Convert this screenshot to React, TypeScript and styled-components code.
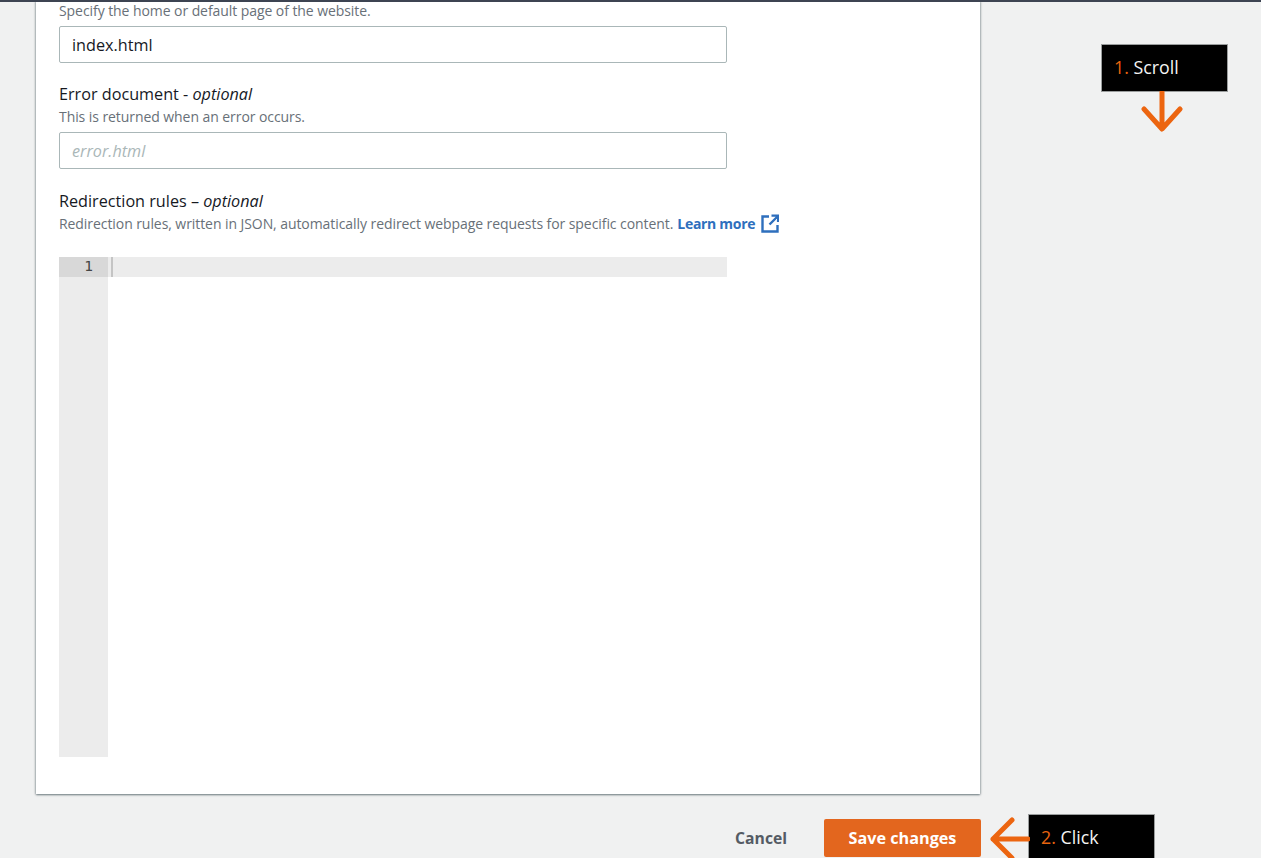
import styled, { createGlobalStyle } from "styled-components";

const GlobalStyle = createGlobalStyle`
  html, body {
    margin: 0;
    height: 100%;
    overflow: hidden;
    background: #f2f3f3;
  }
  * {
    box-sizing: border-box;
  }
`;

const Page = styled.div`
  position: relative;
  width: 1261px;
  height: 858px;
  padding-top: 1px;
  overflow: hidden;
  background: #f0f1f1;
  font-family: "Open Sans", "Noto Sans", sans-serif;
  color: #16191f;

  &::before {
    content: "";
    position: absolute;
    top: 0;
    left: 0;
    right: 0;
    height: 2px;
    background: #3d4452;
  }
`;

const Panel = styled.section`
  width: 944px;
  height: 793px;
  margin-left: 36px;
  padding: 0 23px;
  background: #fff;
  box-shadow: 0 1px 2px 0 rgba(0, 28, 36, 0.5), -1px 0 2px 0 rgba(0, 28, 36, 0.15), 1px 0 2px 0 rgba(0, 28, 36, 0.15);
`;

const Field = styled.div<{ $gap?: number }>`
  display: flex;
  flex-direction: column;
  margin-bottom: ${props => props.$gap ?? 19}px;
`;

const Label = styled.label`
  height: 25px;
  font-size: 16.2px;
  line-height: 24px;

  em {
    font-style: italic;
  }
`;

const Hint = styled.p`
  margin: 0;
  height: 19px;
  font-size: 14px;
  line-height: 19px;
  color: #687078;
  letter-spacing: -0.07px;
  display: flex;
  align-items: center;
  white-space: nowrap;
`;

const Input = styled.div<{ $placeholder?: boolean }>`
  width: 668px;
  height: 37px;
  margin-top: 6px;
  padding: 0 12px;
  border: 1px solid #aab7b8;
  border-radius: 2px;
  font-size: 16.2px;
  line-height: 36px;
  color: ${props => (props.$placeholder ? "#aab7b8" : "#16191f")};
  font-style: ${props => (props.$placeholder ? "italic" : "normal")};
`;

const LearnMore = styled.a`
  margin-left: 4px;
  color: #2e6fbd;
  font-weight: 700;
  letter-spacing: -0.3px;
  display: inline-flex;
  align-items: center;
  gap: 6px;
`;

const Editor = styled.div`
  display: grid;
  grid-template-columns: 49px 1fr;
  width: 668px;
  height: 500px;
  margin-top: 24px;
`;

const Gutter = styled.div`
  background: #ececec;
`;

const GutterActive = styled.div`
  height: 20px;
  padding-right: 15px;
  background: #d8d8d8;
  text-align: right;
  font-family: "DejaVu Sans Mono", monospace;
  font-size: 14.5px;
  line-height: 19px;
  color: #444;
`;

const ActiveLine = styled.div`
  height: 20px;
  padding-left: 3px;
  background: #ececec;
`;

const Cursor = styled.div`
  width: 2px;
  height: 20px;
  background: #c4c4c4;
`;

const Footer = styled.footer`
  display: flex;
  justify-content: flex-end;
  align-items: center;
  gap: 37px;
  width: 981px;
  margin-top: 25px;
`;

const CancelButton = styled.button`
  padding: 0;
  border: 0;
  background: none;
  font: 700 15.7px "Open Sans", "Noto Sans", sans-serif;
  color: #545b64;
`;

const SaveButton = styled.button`
  width: 157px;
  height: 38px;
  border: 0;
  border-radius: 2px;
  background: #e3661e;
  color: #fff;
  font: 700 16.2px "Open Sans", "Noto Sans", sans-serif;
`;

const Callout = styled.div<{ $top: number; $left: number }>`
  position: absolute;
  top: ${props => props.$top}px;
  left: ${props => props.$left}px;
  width: 127px;
  height: 48px;
  padding-left: 12px;
  background: #000;
  border: 1px solid #9a9d9d;
  color: #f4f4f4;
  font-size: 17.8px;
  line-height: 44px;
`;

const Step = styled.span`
  color: #e8640f;
`;

const Arrow = styled.svg<{ $top: number; $left: number }>`
  position: absolute;
  top: ${props => props.$top}px;
  left: ${props => props.$left}px;
  fill: none;
  stroke: #ec6510;
  stroke-width: 5;
  stroke-linecap: round;
  stroke-linejoin: round;
`;

function App() {
  return (
    <>
      <GlobalStyle />
      <Page>
        <Panel>
          <Field>
            <Hint>Specify the home or default page of the website.</Hint>
            <Input>index.html</Input>
          </Field>
          <Field $gap={20}>
            <Label>
              Error document - <em>optional</em>
            </Label>
            <Hint>This is returned when an error occurs.</Hint>
            <Input $placeholder>error.html</Input>
          </Field>
          <Field>
            <Label>
              Redirection rules – <em>optional</em>
            </Label>
            <Hint>
              Redirection rules, written in JSON, automatically redirect webpage requests for specific content.
              <LearnMore>
                Learn more
                <svg width="18" height="19" viewBox="0 0 18 19" fill="none" stroke="#2e6fbd" strokeWidth="2.4">
                  <path d="M8 2.5H1.5v15h15v-6.5" />
                  <path d="M8.5 10.5 16.5 2.5M10.5 1.6h6.6v6.4" />
                </svg>
              </LearnMore>
            </Hint>
            <Editor>
              <Gutter>
                <GutterActive>1</GutterActive>
              </Gutter>
              <ActiveLine>
                <Cursor />
              </ActiveLine>
            </Editor>
          </Field>
        </Panel>
        <Footer>
          <CancelButton>Cancel</CancelButton>
          <SaveButton>Save changes</SaveButton>
        </Footer>
        <Callout $top={44} $left={1101}>
          <Step>1.</Step> Scroll
        </Callout>
        <Arrow $top={91} $left={1139} width="46" height="44" viewBox="0 0 46 44">
          <path d="M23 1v36M5 18l18 20 18-20" />
        </Arrow>
        <Callout $top={814} $left={1028}>
          <Step>2.</Step> Click
        </Callout>
        <Arrow $top={813} $left={988} width="42" height="50" viewBox="0 0 42 50">
          <path d="M40 26H5M24 7 5 26l19 19" />
        </Arrow>
      </Page>
    </>
  );
}

export default App;
